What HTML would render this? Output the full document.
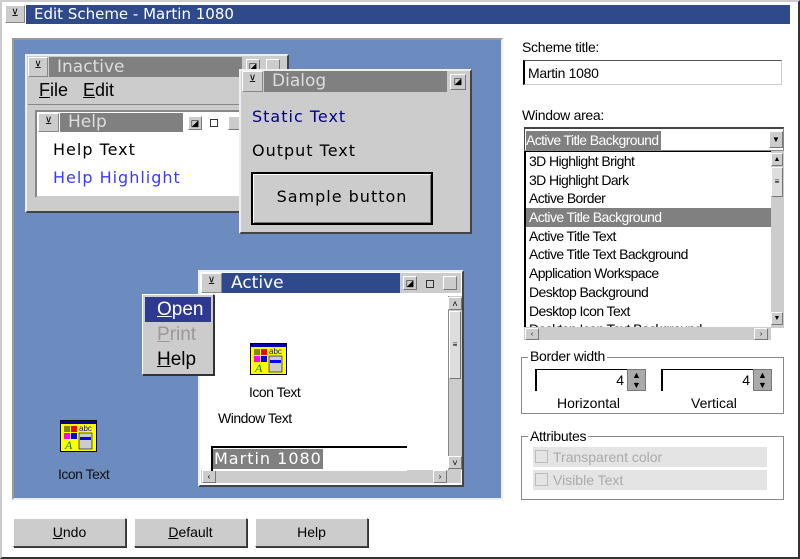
<!DOCTYPE html>
<html><head><style>
*{box-sizing:border-box;margin:0;padding:0}
body{width:800px;height:559px;background:#fff;position:relative;overflow:hidden;font-family:"Liberation Sans",sans-serif;font-size:14px;color:#000}
.a{position:absolute;white-space:nowrap}
.win{background:#ccc;border:2px solid;border-color:#eee #444 #444 #eee}
.sysm{background:#ccc;border:1px solid;border-color:#fff #888 #888 #fff;font-size:10px;text-align:center;line-height:16px}
.btn{background:#ccc;border:1px solid;border-color:#fff #444 #444 #fff;box-shadow:1px 1px 0 #333;text-align:center;line-height:27px;font-size:14px}
.p{font-family:"DejaVu Sans",sans-serif;font-size:16px;letter-spacing:1px}
.tb{font-family:"DejaVu Sans",sans-serif;font-size:17px;color:#ddd;padding-left:8px;line-height:20px}
.ck{background:#ccc;border:1px solid;border-color:#fff #777 #777 #fff;width:14px;height:14px;font-size:9px;text-align:center;line-height:12px}
.li{height:18.7px;line-height:18.7px;padding-left:3px;letter-spacing:-.6px}
</style></head><body>
<div class="a" style="left:0;top:0;width:800px;height:559px;border:2px solid;border-color:#ccc #333 #333 #ccc"></div>
<div class="a sysm" style="left:5px;top:5px;width:20px;height:18px;line-height:16px">⊻</div>
<div class="a" style="left:26px;top:5px;width:764px;height:19px;background:#2f4a8a;color:#fff;font-family:'DejaVu Sans',sans-serif;font-size:15px;line-height:19px;padding-left:8px">Edit Scheme - Martin 1080</div>
<div class="a" style="left:12px;top:38px;width:491px;height:462px;background:#6c8cbf;border:2px solid;border-color:#999 #eee #eee #999"></div>
<div class="a win" style="left:25px;top:54px;width:264px;height:159px"></div>
<div class="a sysm" style="left:28px;top:57px;width:20px;height:20px">⊻</div>
<div class="a tb" style="left:49px;top:57px;width:193px;height:20px;background:#808080">Inactive</div>
<div class="a ck" style="left:246px;top:59px">◪</div><div class="a ck" style="left:266px;top:59px"></div>
<div class="a" style="left:39px;top:80px;font-size:18px"><u>F</u>ile &nbsp;&nbsp;<u>E</u>dit</div>
<div class="a" style="left:28px;top:104px;width:258px;height:1px;background:#888"></div>
<div class="a" style="left:35px;top:110px;width:220px;height:88px;background:#fff;border:2px solid;border-color:#888 #ccc #ccc #888"></div>
<div class="a sysm" style="left:38px;top:113px;width:21px;height:19px">⊻</div>
<div class="a tb" style="left:60px;top:113px;width:123px;height:19px;background:#808080;line-height:19px">Help</div>
<div class="a ck" style="left:188px;top:116px">◪</div><div class="a" style="left:210px;top:119px;width:8px;height:8px;border:1px solid #333"></div><div class="a ck" style="left:228px;top:116px"></div>
<div class="a p" style="left:53px;top:140px">Help Text</div>
<div class="a p" style="left:53px;top:168px;color:#3a3aff">Help Highlight</div>
<div class="a win" style="left:239px;top:69px;width:233px;height:165px"></div>
<div class="a sysm" style="left:242px;top:71px;width:21px;height:21px">⊻</div>
<div class="a tb" style="left:264px;top:71px;width:183px;height:21px;background:#808080">Dialog</div>
<div class="a ck" style="left:450px;top:74px;width:16px;height:16px">◪</div>
<div class="a p" style="left:252px;top:107px;color:#00008b">Static Text</div>
<div class="a p" style="left:252px;top:141px">Output Text</div>
<div class="a" style="left:251px;top:172px;width:182px;height:53px;border:2px solid #000;background:#ccc;box-shadow:inset 1px 1px #fff,inset -1px -1px #777"></div>
<div class="a p" style="left:251px;top:187px;width:182px;text-align:center">Sample button</div>
<div class="a win" style="left:198px;top:270px;width:266px;height:217px;background:#fff"></div>
<div class="a sysm" style="left:201px;top:273px;width:21px;height:20px">⊻</div>
<div class="a" style="left:222px;top:273px;width:178px;height:20px;background:#2f4a8a;color:#fff;font-family:'DejaVu Sans',sans-serif;font-size:17px;line-height:20px;padding-left:9px">Active</div>
<div class="a" style="left:400px;top:273px;width:61px;height:20px;background:#ccc"></div>
<div class="a ck" style="left:403px;top:276px">◪</div><div class="a" style="left:426px;top:280px;width:8px;height:8px;border:1px solid #333"></div><div class="a ck" style="left:443px;top:276px"></div>
<div class="a" style="left:448px;top:296px;width:14px;height:174px;background:#ccc;border-left:1px solid #888"></div>
<div class="a ck" style="left:448px;top:297px;height:13px">˄</div>
<div class="a" style="left:449px;top:311px;width:12px;height:68px;background:#ddd;border:1px solid;border-color:#fff #777 #777 #fff;font-size:8px;text-align:center;line-height:66px">≡</div>
<div class="a ck" style="left:448px;top:456px;height:13px">˅</div>
<div class="a" style="left:201px;top:470px;width:260px;height:13px;background:#ccc"></div>
<div class="a ck" style="left:202px;top:470px;height:13px;font-size:8px">‹</div>
<div class="a ck" style="left:433px;top:470px;height:13px;font-size:8px">›</div>
<div class="a" style="left:211px;top:446px;width:196px;height:25px;border-top:2px solid #000;border-left:2px solid #000;background:#fff"></div>
<div class="a p" style="left:213px;top:449px;background:#808080;color:#fff;padding:0 1px;line-height:20px">Martin 1080</div>
<svg class="a" style="left:250px;top:343px" width="37" height="32" viewBox="0 0 37 32"><rect x=".5" y=".5" width="36" height="31" fill="#ff0" stroke="#000"/><rect x="1" y="1" width="35" height="3" fill="#00a"/><rect x="4" y="6" width="6" height="6" fill="#880"/><rect x="11" y="6" width="6" height="6" fill="#f00"/><rect x="4" y="13" width="6" height="6" fill="#f0f"/><rect x="11" y="13" width="6" height="6" fill="#00f"/><text x="5" y="29" font-size="12" font-style="italic" fill="#080" font-family="Liberation Serif">A</text><text x="19" y="11" font-size="8" fill="#00f" font-family="Liberation Sans">abc</text><rect x="19" y="13" width="13" height="16" fill="#ccc" stroke="#000" stroke-width=".6"/><rect x="20" y="17" width="11" height="3" fill="#00f"/></svg>
<div class="a" style="left:249px;top:384px;font-size:14px;letter-spacing:-.5px">Icon Text</div>
<div class="a" style="left:218px;top:410px;font-size:14px;letter-spacing:-.5px">Window Text</div>
<svg class="a" style="left:60px;top:420px" width="37" height="32" viewBox="0 0 37 32"><rect x=".5" y=".5" width="36" height="31" fill="#ff0" stroke="#000"/><rect x="1" y="1" width="35" height="3" fill="#00a"/><rect x="4" y="6" width="6" height="6" fill="#880"/><rect x="11" y="6" width="6" height="6" fill="#f00"/><rect x="4" y="13" width="6" height="6" fill="#f0f"/><rect x="11" y="13" width="6" height="6" fill="#00f"/><text x="5" y="29" font-size="12" font-style="italic" fill="#080" font-family="Liberation Serif">A</text><text x="19" y="11" font-size="8" fill="#00f" font-family="Liberation Sans">abc</text><rect x="19" y="13" width="13" height="16" fill="#ccc" stroke="#000" stroke-width=".6"/><rect x="20" y="17" width="11" height="3" fill="#00f"/></svg>
<div class="a" style="left:58px;top:466px;font-size:14px;letter-spacing:-.5px;color:#111">Icon Text</div>
<div class="a" style="left:142px;top:294px;width:72px;height:81px;background:#ccc;border:1px solid;border-color:#fff #333 #333 #fff;box-shadow:1px 1px 0 #333"></div>
<div class="a" style="left:145px;top:297px;width:66px;height:25px;background:#2e3a92;color:#fff;font-size:19px;line-height:25px;padding-left:12px"><u>O</u>pen</div>
<div class="a" style="left:157px;top:322px;font-size:19px;color:#999;line-height:25px"><u>P</u>rint</div>
<div class="a" style="left:157px;top:347px;font-size:19px;line-height:25px"><u>H</u>elp</div>
<div class="a" style="left:522px;top:39px;letter-spacing:-.3px">Scheme title:</div>
<div class="a" style="left:523px;top:60px;width:259px;height:25px;border:1px solid;border-color:#555 #ccc #ccc #555;border-left:2px solid #000;padding-left:3px;line-height:24px;letter-spacing:-.3px">Martin 1080</div>
<div class="a" style="left:522px;top:107px;letter-spacing:-.3px">Window area:</div>
<div class="a" style="left:524px;top:127px;width:260px;height:24px;border:1px solid;border-top:2px solid #444;border-color:#444 #888 #888 #444;background:#fff"></div>
<div class="a" style="left:526px;top:131px;background:#808080;color:#fff;line-height:19px;letter-spacing:-.6px;padding-right:2px">Active Title Background</div>
<div class="a ck" style="left:769px;top:131px;height:17px;font-size:8px;line-height:15px">▼</div>
<div class="a" style="left:524px;top:151px;width:247px;height:177px;background:#fff;border-left:2px solid #000;border-top:1px solid #000;overflow:hidden">
<div class="li">3D Highlight Bright</div><div class="li">3D Highlight Dark</div><div class="li">Active Border</div><div class="li" style="background:#808080;color:#fff">Active Title Background</div><div class="li">Active Title Text</div><div class="li">Active Title Text Background</div><div class="li">Application Workspace</div><div class="li">Desktop Background</div><div class="li">Desktop Icon Text</div><div class="li">Desktop Icon Text Background</div></div>
<div class="a" style="left:771px;top:151px;width:13px;height:177px;background:#ccc"></div>
<div class="a ck" style="left:771px;top:153px;width:12px;height:13px;font-size:7px">▲</div>
<div class="a" style="left:771px;top:167px;width:12px;height:30px;background:#ddd;border:1px solid;border-color:#fff #777 #777 #fff;font-size:8px;text-align:center;line-height:28px">≡</div>
<div class="a ck" style="left:771px;top:312px;width:12px;height:13px;font-size:7px">▼</div>
<div class="a" style="left:524px;top:327px;width:247px;height:13px;background:#ccc"></div>
<div class="a ck" style="left:525px;top:328px;height:12px;font-size:7px">‹</div>
<div class="a ck" style="left:754px;top:328px;height:12px;font-size:7px">›</div>
<div class="a" style="left:521px;top:357px;width:263px;height:57px;border:1px solid #888;box-shadow:1px 1px #fff"></div>
<div class="a" style="left:528px;top:348px;background:#fff;padding:0 2px;letter-spacing:-.3px">Border width</div>
<div class="a" style="left:535px;top:369px;width:92px;height:22px;border-left:2px solid #000;border-top:1px solid #000;text-align:right;padding-right:3px;line-height:21px">4</div>
<div class="a" style="left:627px;top:369px;width:19px;height:22px;background:#aaa;border:1px solid #777;font-size:9px;line-height:10px;text-align:center">▲<br>▼</div>
<div class="a" style="left:661px;top:369px;width:92px;height:22px;border-left:2px solid #000;border-top:1px solid #000;text-align:right;padding-right:3px;line-height:21px">4</div>
<div class="a" style="left:753px;top:369px;width:19px;height:22px;background:#aaa;border:1px solid #777;font-size:9px;line-height:10px;text-align:center">▲<br>▼</div>
<div class="a" style="left:557px;top:395px">Horizontal</div>
<div class="a" style="left:691px;top:395px">Vertical</div>
<div class="a" style="left:521px;top:436px;width:263px;height:64px;border:1px solid #888;box-shadow:1px 1px #fff"></div>
<div class="a" style="left:528px;top:428px;background:#fff;padding:0 2px;letter-spacing:-.3px">Attributes</div>
<div class="a" style="left:533px;top:447px;width:234px;height:20px;background:#e4e4e4;color:#aaa;padding-left:20px;line-height:20px">Transparent color</div>
<div class="a" style="left:535px;top:450px;width:13px;height:13px;border:1px solid #bbb"></div>
<div class="a" style="left:533px;top:470px;width:234px;height:20px;background:#e4e4e4;color:#aaa;padding-left:20px;line-height:20px">Visible Text</div>
<div class="a" style="left:535px;top:473px;width:13px;height:13px;border:1px solid #bbb"></div>
<div class="a btn" style="left:13px;top:518px;width:113px;height:29px"><u>U</u>ndo</div>
<div class="a btn" style="left:134px;top:518px;width:113px;height:29px"><u>D</u>efault</div>
<div class="a btn" style="left:255px;top:518px;width:113px;height:29px">Help</div>
</body></html>
